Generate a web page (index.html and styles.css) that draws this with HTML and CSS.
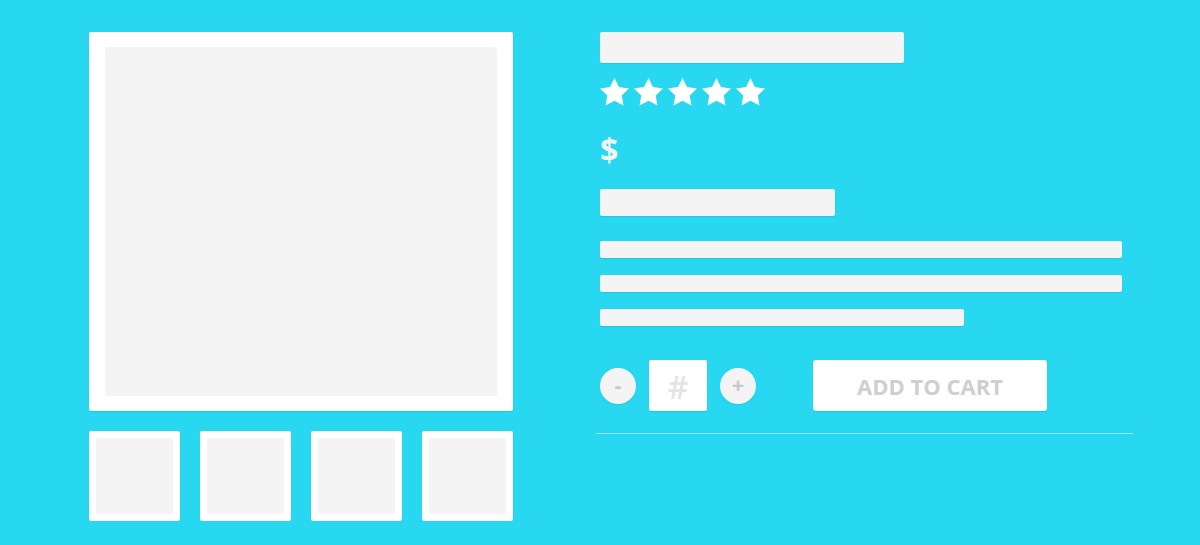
FILE: index.html
```html
<!doctype html>
<html>
<head>
    <title>Product</title>
    <meta charset="utf-8"/>
    <link rel="stylesheet" href="styles.css">
</head>
<body>
    <div class="product">
        <div class="gallery">
            <div class="photo"><div class="photo-inner"></div></div>
            <div class="thumbs">
                <div class="thumb"><div class="thumb-inner"></div></div>
                <div class="thumb"><div class="thumb-inner"></div></div>
                <div class="thumb"><div class="thumb-inner"></div></div>
                <div class="thumb"><div class="thumb-inner"></div></div>
            </div>
        </div>
        <div class="details">
            <div class="bar title"></div>
            <div class="stars">
                <svg viewBox="2 2 20 19.3"><path d="M12 2l3.09 6.26L22 9.27l-5 4.87 1.18 6.88L12 17.77l-6.18 3.25L7 14.14 2 9.27l6.91-1.01z"/></svg>
                <svg viewBox="2 2 20 19.3"><path d="M12 2l3.09 6.26L22 9.27l-5 4.87 1.18 6.88L12 17.77l-6.18 3.25L7 14.14 2 9.27l6.91-1.01z"/></svg>
                <svg viewBox="2 2 20 19.3"><path d="M12 2l3.09 6.26L22 9.27l-5 4.87 1.18 6.88L12 17.77l-6.18 3.25L7 14.14 2 9.27l6.91-1.01z"/></svg>
                <svg viewBox="2 2 20 19.3"><path d="M12 2l3.09 6.26L22 9.27l-5 4.87 1.18 6.88L12 17.77l-6.18 3.25L7 14.14 2 9.27l6.91-1.01z"/></svg>
                <svg viewBox="2 2 20 19.3"><path d="M12 2l3.09 6.26L22 9.27l-5 4.87 1.18 6.88L12 17.77l-6.18 3.25L7 14.14 2 9.27l6.91-1.01z"/></svg>
            </div>
            <div class="price">$</div>
            <div class="bar subtitle"></div>
            <div class="lines">
                <div class="bar line"></div>
                <div class="bar line"></div>
                <div class="bar line short"></div>
            </div>
            <div class="buy">
                <div class="qty">
                    <button class="round">-</button>
                    <div class="count">#</div>
                    <button class="round">+</button>
                </div>
                <button class="cart">ADD TO CART</button>
            </div>
            <div class="divider"></div>
        </div>
    </div>
</body>
</html>
```

FILE: styles.css
```css
body {
    margin: 0;
    background-color: #28d7f0;
    font-family: "Open Sans", sans-serif;
}
.product {
    display: flex;
    padding: 32px 0 0 89px;
    gap: 87px;
}
.gallery {
    width: 424px;
}
.photo {
    background-color: white;
    height: 349px;
    padding: 15px 16px 15px 16px;
    border-radius: 2px;
    box-shadow: 0 1px 1px rgba(0, 0, 0, 0.08);
}
.photo-inner {
    background-color: #f4f4f4;
    height: 100%;
    border-radius: 2px;
}
.thumbs {
    display: flex;
    gap: 20px;
    margin-top: 20px;
}
.thumb {
    width: 77px;
    height: 76px;
    padding: 7px;
    background-color: white;
    border-radius: 2px;
    box-shadow: 0 1px 1px rgba(0, 0, 0, 0.08);
}
.thumb-inner {
    background-color: #f4f4f4;
    height: 100%;
    border-radius: 2px;
}
.details {
    width: 533px;
}
.bar {
    background-color: #f4f4f4;
    border-radius: 2px;
    box-shadow: 0 1px 1px rgba(0, 0, 0, 0.08);
}
.title {
    width: 304px;
    height: 31px;
}
.stars {
    display: flex;
    gap: 5px;
    margin-top: 15px;
    height: 28px;
}
.stars svg {
    width: 29px;
    height: 28px;
    fill: white;
}
.price {
    color: #f4f4f4;
    font-size: 32px;
    font-weight: 700;
    line-height: 44px;
    margin-top: 22px;
    height: 44px;
}
.subtitle {
    width: 235px;
    height: 27px;
    margin-top: 17px;
}
.lines {
    display: flex;
    flex-direction: column;
    gap: 17px;
    margin-top: 25px;
}
.line {
    width: 522px;
    height: 17px;
}
.line.short {
    width: 364px;
}
.buy {
    display: flex;
    align-items: center;
    margin-top: 34px;
    gap: 57px;
}
.qty {
    display: flex;
    align-items: center;
    gap: 13px;
}
.round {
    width: 36px;
    height: 36px;
    border: none;
    border-radius: 50%;
    background-color: #f4f4f4;
    color: #c8c8c8;
    font-family: "Open Sans", sans-serif;
    font-size: 22px;
    font-weight: 700;
    line-height: 32px;
    padding: 0 0 3px 0;
    box-shadow: 0 1px 1px rgba(0, 0, 0, 0.08);
}
.count {
    width: 58px;
    height: 51px;
    background-color: white;
    border-radius: 2px;
    color: #e4e4e4;
    font-size: 32px;
    font-weight: 600;
    line-height: 54px;
    text-align: center;
    box-shadow: 0 1px 1px rgba(0, 0, 0, 0.08);
}
.cart {
    width: 234px;
    height: 51px;
    border: none;
    border-radius: 3px;
    background-color: white;
    color: #cfcfcf;
    font-family: "Open Sans", sans-serif;
    font-size: 22px;
    font-weight: 700;
    padding: 0;
    box-shadow: 0 1px 1px rgba(0, 0, 0, 0.08);
}
.divider {
    height: 1px;
    width: 537px;
    margin: 22px 0 0 -4px;
    background-color: #8ae9f7;
}
```
